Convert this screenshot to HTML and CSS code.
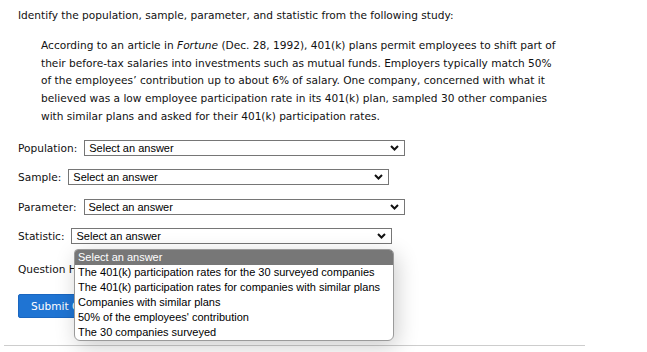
FILE: index.html
```html
<!DOCTYPE html>
<html>
<head>
<meta charset="utf-8">
<link rel="stylesheet" href="styles.css">
</head>
<body>
<div class="page">
  <div class="content">
    <p class="intro">Identify the population, sample, parameter, and statistic from the following study:</p>
    <p class="study">According to an article in <i>Fortune</i> (Dec. 28, 1992), 401(k) plans permit employees to shift part of<br>their before-tax salaries into investments such as mutual funds. Employers typically match 50%<br>of the employees’ contribution up to about 6% of salary. One company, concerned with what it<br>believed was a low employee participation rate in its 401(k) plan, sampled 30 other companies<br>with similar plans and asked for their 401(k) participation rates.</p>
    <div class="fields">
      <div class="field"><span class="label">Population:</span><div class="select"><span>Select an answer</span><svg class="chev" width="9" height="6" viewBox="0 0 9 6"><polyline points="1,1 4.5,4.5 8,1" fill="none" stroke="#111" stroke-width="2"/></svg></div></div>
      <div class="field"><span class="label">Sample:</span><div class="select"><span>Select an answer</span><svg class="chev" width="9" height="6" viewBox="0 0 9 6"><polyline points="1,1 4.5,4.5 8,1" fill="none" stroke="#111" stroke-width="2"/></svg></div></div>
      <div class="field"><span class="label">Parameter:</span><div class="select"><span>Select an answer</span><svg class="chev" width="9" height="6" viewBox="0 0 9 6"><polyline points="1,1 4.5,4.5 8,1" fill="none" stroke="#111" stroke-width="2"/></svg></div></div>
      <div class="field"><span class="label">Statistic:</span><div class="select"><span>Select an answer</span><svg class="chev" width="9" height="6" viewBox="0 0 9 6"><polyline points="1,1 4.5,4.5 8,1" fill="none" stroke="#111" stroke-width="2"/></svg></div></div>
    </div>
    <p class="help">Question Help:</p>
    <button class="submit">Submit Question</button>
  </div>
  <hr class="rule">
</div>
<ul class="dropdown">
  <li class="sel">Select an answer</li>
  <li>The 401(k) participation rates for the 30 surveyed companies</li>
  <li>The 401(k) participation rates for companies with similar plans</li>
  <li>Companies with similar plans</li>
  <li>50% of the employees' contribution</li>
  <li>The 30 companies surveyed</li>
</ul>
</body>
</html>
```
FILE: styles.css
```css
html, body {
  margin: 0;
  padding: 0;
  background: #fff;
}
body {
  position: relative;
  width: 647px;
  height: 352px;
  overflow: hidden;
  font-family: "DejaVu Sans", Verdana, sans-serif;
  font-size: 10.6px;
  color: #111;
}
.page {
  margin-left: 4px;
  width: 581px;
  padding-top: 7px;
}
.content {
  padding-left: 14px;
}
.intro {
  margin: 0;
  line-height: 17.75px;
  white-space: nowrap;
}
.study {
  margin: 12px 0 0 23px;
  line-height: 17.75px;
  white-space: nowrap;
}
.fields {
  margin-top: 14.5px;
  display: flex;
  flex-direction: column;
  gap: 13.3px;
}
.field {
  display: flex;
  align-items: center;
  gap: 7px;
  height: 16px;
}
.label {
  white-space: nowrap;
}
.select {
  box-sizing: border-box;
  width: 321px;
  height: 16px;
  border: 1px solid #767676;
  background: #fff;
  display: flex;
  align-items: center;
  justify-content: space-between;
  padding: 0 5px 0 4px;
  font-family: "Liberation Sans", Arial, sans-serif;
  font-size: 11px;
  color: #000;
}
.chev {
  display: block;
}
.help {
  margin: 17px 0 0;
  line-height: 17.75px;
}
.submit {
  margin-top: 15px;
  height: 24px;
  padding: 0 12px;
  border: 1px solid #1a66c0;
  border-radius: 2px;
  background: #1f74d3;
  color: #fff;
  font-family: "DejaVu Sans", Verdana, sans-serif;
  font-size: 10.6px;
}
.rule {
  margin: 27px 0 0;
  border: 0;
  height: 1px;
  background: #cdcdcd;
}
.dropdown {
  position: absolute;
  left: 74px;
  top: 249px;
  box-sizing: border-box;
  width: 320px;
  margin: 0;
  padding: 0;
  list-style: none;
  background: #fff;
  border: 1px solid #9a9a9a;
  border-radius: 4px 5px 6px 6px;
  overflow: hidden;
  box-shadow: 3px 6px 22px rgba(0, 0, 0, 0.2);
  font-family: "Liberation Sans", Arial, sans-serif;
  font-size: 11px;
  color: #000;
}
.dropdown li {
  height: 15px;
  line-height: 15px;
  padding-left: 3px;
  white-space: nowrap;
}
.dropdown li.sel {
  background: #777;
  color: #fff;
}
```
